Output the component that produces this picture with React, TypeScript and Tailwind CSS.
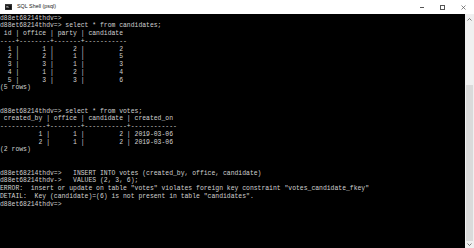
import React from 'react';

const lines: string[] = [
  'd88et68214thdv=>',
  'd88et68214thdv=> select * from candidates;',
  ' id | office | party | candidate',
  '----+--------+-------+-----------',
  '  1 |      1 |     2 |         2',
  '  2 |      2 |     1 |         5',
  '  3 |      3 |     1 |         3',
  '  4 |      1 |     2 |         4',
  '  5 |      3 |     3 |         6',
  '(5 rows)',
  '',
  '',
  'd88et68214thdv=> select * from votes;',
  ' created_by | office | candidate | created_on',
  '------------+--------+-----------+------------',
  '          1 |      1 |         2 | 2019-03-06',
  '          2 |      1 |         2 | 2019-03-06',
  '(2 rows)',
  '',
  '',
  'd88et68214thdv=>   INSERT INTO votes (created_by, office, candidate)',
  'd88et68214thdv->   VALUES (2, 3, 6);',
  'ERROR:  insert or update on table "votes" violates foreign key constraint "votes_candidate_fkey"',
  'DETAIL:  Key (candidate)=(6) is not present in table "candidates".',
  'd88et68214thdv=>',
];

export default function App() {
  return (
    <div className="w-[474px] h-[248px] flex flex-col bg-white overflow-hidden">
      {/* Title bar */}
      <div className="h-[14px] flex items-center bg-white shrink-0">
        <svg className="ml-[5px] w-[7px] h-[6px]" viewBox="0 0 7 6">
          <rect x="0" y="0" width="7" height="6" fill="#3a3a3a" />
          <rect x="0.6" y="1.4" width="5.8" height="4" fill="#111" />
          <rect x="1.2" y="2.2" width="2.2" height="0.6" fill="#e0e0e0" />
          <rect x="1.2" y="3.4" width="3" height="0.6" fill="#9a9a9a" />
        </svg>
        <span className="ml-[5px] font-['Segoe_UI','Liberation_Sans',sans-serif] text-[5.4px] text-[#222] leading-none">
          SQL Shell (psql)
        </span>
        <div className="flex-1" />
        <div className="flex items-center h-full">
          <div className="w-[20px] flex justify-center">
            <div className="w-[4px] h-px bg-[#555]" />
          </div>
          <div className="w-[20px] flex justify-center">
            <div className="w-[5px] h-[5px] border border-[#555]" />
          </div>
          <div className="w-[22px] flex justify-center">
            <svg className="w-[5px] h-[5px]" viewBox="0 0 5 5">
              <path d="M0.5 0.5 L4.5 4.5 M4.5 0.5 L0.5 4.5" stroke="#555" strokeWidth="0.7" />
            </svg>
          </div>
        </div>
      </div>

      {/* Console body */}
      <div className="flex-1 flex min-h-0">
        <div className="flex-1 bg-black overflow-hidden pt-[0.5px]">
          <pre className="font-['Liberation_Mono','DejaVu_Sans_Mono',monospace] text-[6.42px] leading-[7.75px] text-[#d0d0d0] whitespace-pre">
            {lines.join('\n')}
          </pre>
        </div>
        <div className="w-[9px] bg-[#f0f0f0] flex flex-col items-center">
          <svg className="mt-[4px] w-[5px] h-[3px]" viewBox="0 0 5 3">
            <path d="M0.5 2.5 L2.5 0.5 L4.5 2.5" stroke="#606060" strokeWidth="0.8" fill="none" />
          </svg>
          <div className="mt-[64px] w-[7px] flex-1 bg-[#dadada]" />
          <svg className="mt-[2px] mb-[2px] w-[5px] h-[3px]" viewBox="0 0 5 3">
            <path d="M0.5 0.5 L2.5 2.5 L4.5 0.5" stroke="#606060" strokeWidth="0.8" fill="none" />
          </svg>
        </div>
      </div>
    </div>
  );
}
